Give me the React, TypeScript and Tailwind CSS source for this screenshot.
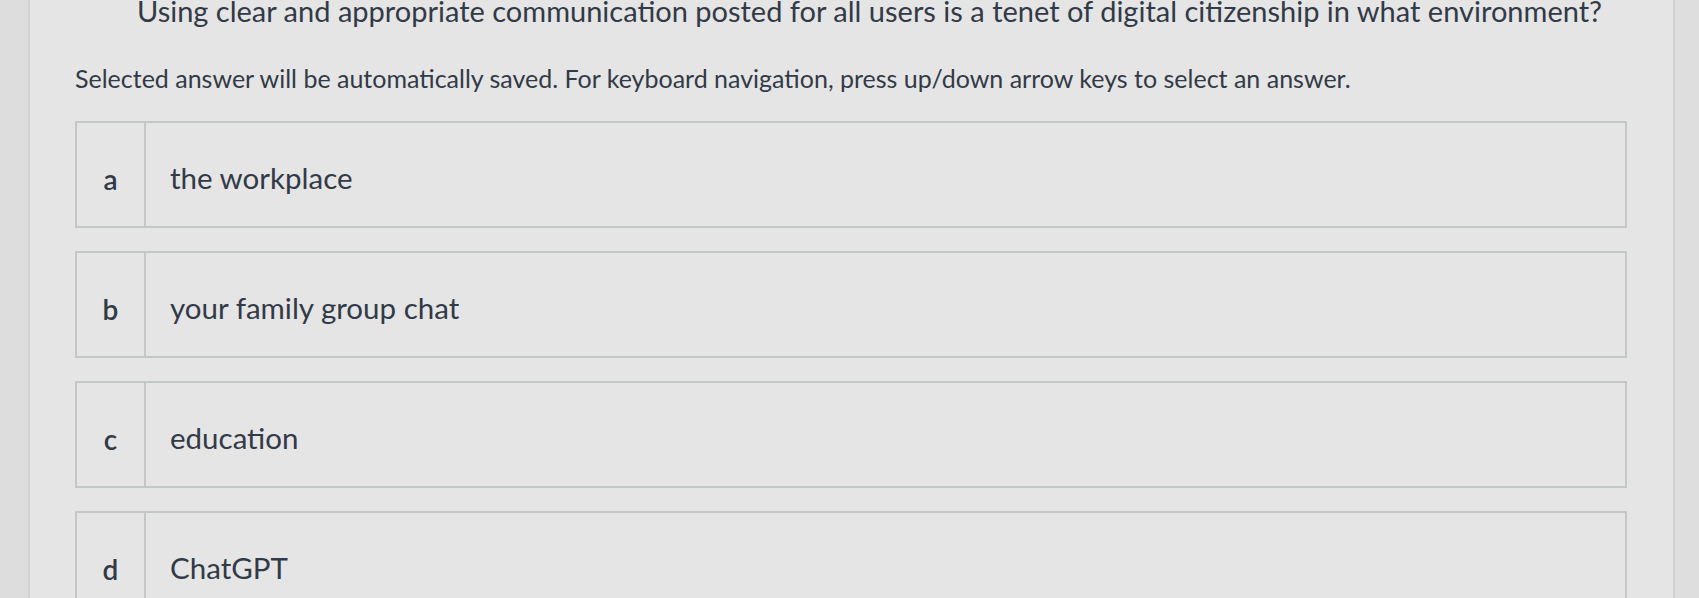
import React from "react";

const answers = [
  { k: "a", t: "the workplace" },
  { k: "b", t: "your family group chat" },
  { k: "c", t: "education" },
  { k: "d", t: "ChatGPT" },
];

export default function App() {
  return (
    <div
      className="flex h-[598px] w-[1699px] overflow-hidden bg-[#e4e5e4] text-[#333a47]"
      style={{ fontFamily: "Lato, 'Open Sans', sans-serif" }}
    >
      <div className="h-full w-[30px] shrink-0 border-r-2 border-[#d2d3d2] bg-[#dcdddc]" />
      <div className="flex min-w-0 flex-1 flex-col pl-[45px]">
        <div className="-mt-[9px] h-[40px] whitespace-nowrap pl-[62px] text-[29px] leading-[40px]">
          Using clear and appropriate communication posted for all users is a tenet of digital citizenship in what environment?
        </div>
        <div className="mt-[30px] whitespace-nowrap text-[25px] leading-[34px]">
          Selected answer will be automatically saved. For keyboard navigation, press up/down arrow keys to select an answer.
        </div>
        <div className="mt-[26px] flex w-[1552px] flex-col gap-[23px]">
          {answers.map((a) => (
            <div
              key={a.k}
              className="flex h-[107px] shrink-0 border-2 border-[#c4c7c7]"
            >
              <div className="flex w-[69px] shrink-0 items-center justify-center border-r-2 border-[#c4c7c7] pt-[8px] text-[28px] font-semibold">
                {a.k}
              </div>
              <div className="flex items-center pl-[24px] pt-[8px] text-[29.5px]">
                {a.t}
              </div>
            </div>
          ))}
        </div>
      </div>
      <div className="h-full w-[26px] shrink-0 border-l-2 border-[#d0d1d0] bg-[#dddedd]" />
    </div>
  );
}
